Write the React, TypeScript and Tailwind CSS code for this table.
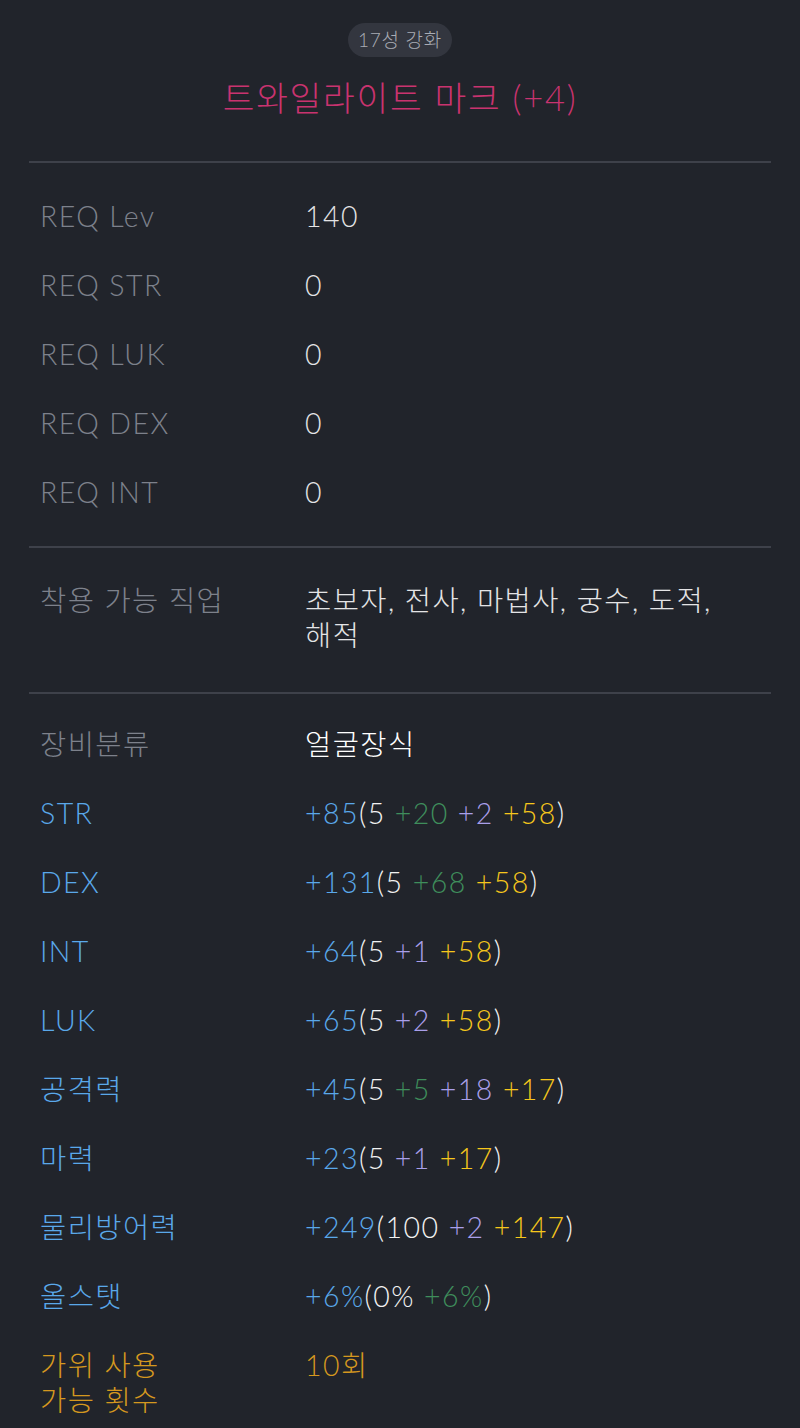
const FONT = "font-['Lato','Noto_Sans_CJK_KR',sans-serif]";

type Part = { text: string; tone: "blue" | "white" | "green" | "purple" | "yellow" };

const TONE: Record<Part["tone"], string> = {
  blue: "text-[#5aa8ea]",
  white: "text-[#f2f2f2]",
  green: "text-[#3f8e5c]",
  purple: "text-[#a99fea]",
  yellow: "text-[#f6c71c]",
};

const REQS = [
  { label: "REQ Lev", value: "140" },
  { label: "REQ STR", value: "0" },
  { label: "REQ LUK", value: "0" },
  { label: "REQ DEX", value: "0" },
  { label: "REQ INT", value: "0" },
];

const b = (text: string): Part => ({ text, tone: "blue" });
const w = (text: string): Part => ({ text, tone: "white" });
const g = (text: string): Part => ({ text, tone: "green" });
const p = (text: string): Part => ({ text, tone: "purple" });
const y = (text: string): Part => ({ text, tone: "yellow" });

const STATS: { label: string; parts: Part[] }[] = [
  { label: "STR", parts: [b("+85"), w("(5 "), g("+20 "), p("+2 "), y("+58"), w(")")] },
  { label: "DEX", parts: [b("+131"), w("(5 "), g("+68 "), y("+58"), w(")")] },
  { label: "INT", parts: [b("+64"), w("(5 "), p("+1 "), y("+58"), w(")")] },
  { label: "LUK", parts: [b("+65"), w("(5 "), p("+2 "), y("+58"), w(")")] },
  { label: "공격력", parts: [b("+45"), w("(5 "), g("+5 "), p("+18 "), y("+17"), w(")")] },
  { label: "마력", parts: [b("+23"), w("(5 "), p("+1 "), y("+17"), w(")")] },
  { label: "물리방어력", parts: [b("+249"), w("(100 "), p("+2 "), y("+147"), w(")")] },
  { label: "올스탯", parts: [b("+6%"), w("(0% "), g("+6%"), w(")")] },
];

function Row({
  label,
  labelClass = "text-[#7d818b]",
  children,
}: {
  label: React.ReactNode;
  labelClass?: string;
  children: React.ReactNode;
}) {
  return (
    <div className="grid grid-cols-[265px_1fr] py-[17px] text-[28.5px] leading-[35px] tracking-[0.05em] break-keep">
      <div className={labelClass}>{label}</div>
      <div>{children}</div>
    </div>
  );
}

export default function App() {
  return (
    <div className={`min-h-[1428px] w-[800px] bg-[#21242b] font-light ${FONT}`}>
      <div className="flex flex-col items-center pt-[23px]">
        <span className="rounded-full bg-[#33363f] px-[10px] text-[19px] leading-[34px] tracking-[0.04em] text-[#a9acb4]">
          17성 강화
        </span>
        <h1 className="mt-[16px] text-[34.5px] leading-[50px] tracking-[0.05em] text-[#c9336f]">
          트와일라이트 마크 (+4)
        </h1>
      </div>

      <div className="mx-[29px] mt-[38px]">
        <div className="h-[2px] bg-[#3e414a]" />

        <section className="pt-[19px] pb-[19px] px-[11px]">
          {REQS.map((r) => (
            <Row key={r.label} label={r.label}>
              <span className="text-[#e4e4e6]">{r.value}</span>
            </Row>
          ))}
        </section>

        <div className="h-[2px] bg-[#3e414a]" />

        <section className="pt-[18px] pb-[22px] px-[11px]">
          <Row label="착용 가능 직업">
            <span className="text-[#e4e4e6]">초보자, 전사, 마법사, 궁수, 도적, 해적</span>
          </Row>
        </section>

        <div className="h-[2px] bg-[#3e414a]" />

        <section className="pt-[16px] px-[11px]">
          <Row label="장비분류">
            <span className="text-white">얼굴장식</span>
          </Row>
          {STATS.map((s) => (
            <Row key={s.label} label={s.label} labelClass="text-[#5aa8ea]">
              {s.parts.map((part, i) => (
                <span key={i} className={TONE[part.tone]}>
                  {part.text}
                </span>
              ))}
            </Row>
          ))}
          <Row label={<>가위 사용<br />가능 횟수</>} labelClass="text-[#d5981f]">
            <span className="text-[#d5981f]">10회</span>
          </Row>
        </section>
      </div>
    </div>
  );
}
